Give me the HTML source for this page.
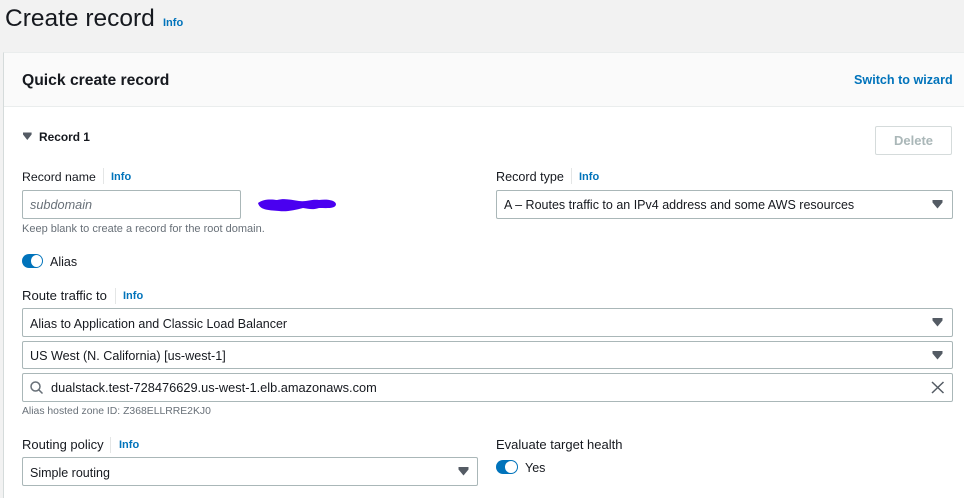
<!DOCTYPE html>
<html><head><meta charset="utf-8">
<style>
*{box-sizing:border-box}
html,body{margin:0;padding:0}
body{width:964px;height:498px;position:relative;overflow:hidden;background:#f2f2f2;font-family:"Liberation Sans",sans-serif;color:#16191f;font-size:13px}
.a{position:absolute;white-space:nowrap;line-height:16px}
.i{color:#0073bb;font-weight:700;font-size:11px}
.l{color:#16191f;font-size:13px}
.sep{position:absolute;width:1px;height:16px;background:#e4e6e6}
.b{position:absolute;background:#fff;border:1px solid #aab7b8;border-radius:2px}
.t{color:#16191f;font-size:12.5px}
.h{color:#687078}
.ar{position:absolute}
</style></head><body>
<div class="a" style="left:5px;top:3px;font-size:24.5px;line-height:32px;color:#16191f">Create record</div>
<div class="a i" style="left:163px;top:15px">Info</div>

<div style="position:absolute;left:3px;top:52px;width:961px;height:446px;background:#fff;border-left:1px solid #d5dbdb;border-top:1px solid #eaeded"></div>
<div style="position:absolute;left:4px;top:53px;width:960px;height:54px;background:#fafafa;border-bottom:1px solid #eaeded"></div>
<div class="a" style="left:22px;top:72px;font-size:15.7px;line-height:18px;font-weight:700">Quick create record</div>
<div class="a" style="left:854px;top:72px;font-size:12.6px;font-weight:700;color:#0073bb">Switch to wizard</div>

<svg class="ar" style="left:23px;top:132px" width="9" height="9"><path d="M0 0.5H8.6V2.5L4.3 8L0 2.5Z" fill="#545b64"/></svg>
<div class="a" style="left:39px;top:129px;font-size:11.9px;font-weight:700">Record 1</div>
<div style="position:absolute;left:875px;top:126px;width:77px;height:29px;border:1px solid #d5dbdb;border-radius:2px;background:#fff;color:#aab7b8;font-weight:700;font-size:13px;line-height:27px;text-align:center">Delete</div>

<div class="a l" style="left:22px;top:169px;font-size:12.3px">Record name</div>
<div class="sep" style="left:103px;top:168px"></div>
<div class="a i" style="left:111px;top:169px">Info</div>
<div class="b" style="left:22px;top:190px;width:219px;height:29px"></div>
<div class="a" style="left:30px;top:197px;font-style:italic;color:#687078;font-size:12.7px">subdomain</div>
<svg style="position:absolute;left:257px;top:197px" width="80" height="16"><path d="M1 6C6 2 14 2 20 3C28 1 34 3 42 4C50 5 54 2 62 3C70 2 78 3 79 7C79 12 70 11 62 11C56 13 52 12 46 11C38 13 30 15 22 14C14 13 3 14 1 6Z" fill="#4a00f0"/></svg>
<div class="a h" style="left:22px;top:221px;font-size:11px">Keep blank to create a record for the root domain.</div>

<div class="a l" style="left:496px;top:169px;font-size:12.6px">Record type</div>
<div class="sep" style="left:571px;top:168px"></div>
<div class="a i" style="left:579px;top:169px">Info</div>
<div class="b" style="left:496px;top:190px;width:457px;height:29px"></div>
<div class="a t" style="left:504px;top:197px">A – Routes traffic to an IPv4 address and some AWS resources</div>
<svg class="ar" style="left:932px;top:200px" width="11" height="9"><path d="M0.5 0H10.5V2.5L5.5 8.5L0.5 2.5Z" fill="#545b64"/></svg>

<div style="position:absolute;left:22px;top:254px;width:21px;height:14px;border-radius:7px;background:#0073bb"></div>
<div style="position:absolute;left:31px;top:255px;width:11px;height:12px;border-radius:50%;background:#fff"></div>
<div class="a l" style="left:50px;top:254px;font-size:12.5px">Alias</div>

<div class="a l" style="left:22px;top:288px;font-size:13.1px">Route traffic to</div>
<div class="sep" style="left:115px;top:288px"></div>
<div class="a i" style="left:123px;top:288px">Info</div>

<div class="b" style="left:22px;top:308px;width:931px;height:29px"></div>
<div class="a t" style="left:30px;top:316px">Alias to Application and Classic Load Balancer</div>
<svg class="ar" style="left:932px;top:318px" width="11" height="9"><path d="M0.5 0H10.5V2.5L5.5 8.5L0.5 2.5Z" fill="#545b64"/></svg>

<div class="b" style="left:22px;top:341px;width:931px;height:28px"></div>
<div class="a t" style="left:30px;top:348px;font-size:12.6px">US West (N. California) [us-west-1]</div>
<svg class="ar" style="left:932px;top:351px" width="11" height="9"><path d="M0.5 0H10.5V2.5L5.5 8.5L0.5 2.5Z" fill="#545b64"/></svg>

<div class="b" style="left:22px;top:373px;width:931px;height:29px"></div>
<svg style="position:absolute;left:29px;top:380px" width="15" height="15" fill="none" stroke="#687078" stroke-width="1.5"><circle cx="6.5" cy="6.5" r="4.5"/><path d="M9.8 9.8L13.5 13.5"/></svg>
<div class="a t" style="left:51px;top:380px;font-size:12.8px">dualstack.test-728476629.us-west-1.elb.amazonaws.com</div>
<svg style="position:absolute;left:931px;top:381px" width="14" height="13" fill="none" stroke="#545b64" stroke-width="1.5"><path d="M1 1L12.5 12M12.5 1L1 12"/></svg>

<div class="a h" style="left:22px;top:404px;font-size:10.4px">Alias hosted zone ID: Z368ELLRRE2KJ0</div>

<div class="a l" style="left:22px;top:437px">Routing policy</div>
<div class="sep" style="left:110px;top:437px"></div>
<div class="a i" style="left:119px;top:437px">Info</div>
<div class="b" style="left:22px;top:457px;width:456px;height:29px"></div>
<div class="a t" style="left:30px;top:465px">Simple routing</div>
<svg class="ar" style="left:458px;top:467px" width="11" height="9"><path d="M0.5 0H10.5V2.5L5.5 8.5L0.5 2.5Z" fill="#545b64"/></svg>

<div class="a l" style="left:496px;top:437px">Evaluate target health</div>
<div style="position:absolute;left:496px;top:460px;width:22px;height:14px;border-radius:7px;background:#0073bb"></div>
<div style="position:absolute;left:505px;top:461px;width:12px;height:12px;border-radius:50%;background:#fff"></div>
<div class="a l" style="left:525px;top:460px;font-size:12.5px">Yes</div>
</body></html>
